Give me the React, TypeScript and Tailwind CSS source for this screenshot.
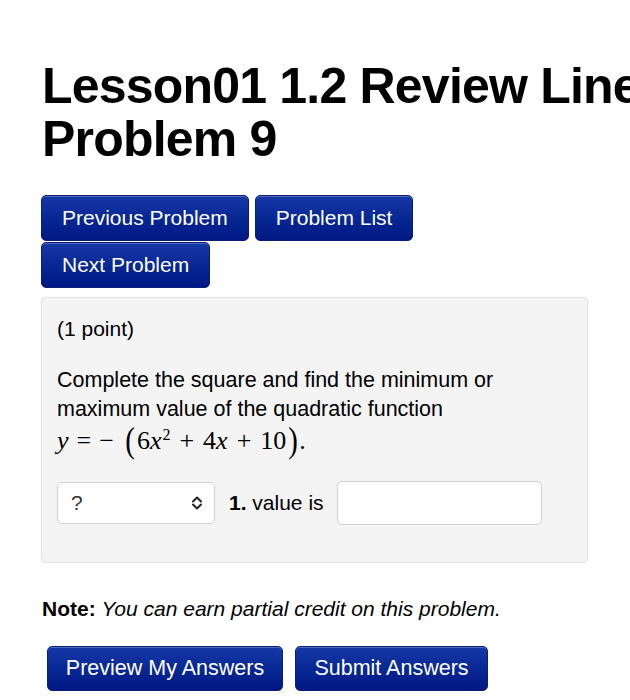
import React from "react";

const btn =
  "rounded-[5px] border border-[#0b1f73] bg-gradient-to-b from-[#1537a6] to-[#001783] text-white shadow-[inset_0_1px_0_rgba(255,255,255,0.25)]";

function UpDown() {
  return (
    <svg width="14" height="16" viewBox="0 0 14 16" fill="none" stroke="#222" strokeWidth="2" strokeLinecap="round" strokeLinejoin="round">
      <path d="M3 6.5 L7 2.5 L11 6.5" />
      <path d="M3 9.5 L7 13.5 L11 9.5" />
    </svg>
  );
}

export default function App() {
  return (
    <div className="w-[630px] h-[700px] overflow-hidden bg-white text-black font-['Liberation_Sans',Arial,sans-serif]">
      <div className="pl-[42px] pt-[60px]">
        <h1 className="whitespace-nowrap text-[50px] font-bold leading-[53px] tracking-[-0.8px]">
          Lesson01 1.2 Review Linear
          <br />
          Problem 9
        </h1>

        <div className="mt-[29px] flex flex-wrap gap-x-[6px] gap-y-[1px] w-[400px] -ml-px">
          <button className={`${btn} h-[46px] px-[20px] text-[21px]`}>Previous Problem</button>
          <button className={`${btn} h-[46px] px-[20px] text-[21px]`}>Problem List</button>
          <button className={`${btn} h-[46px] px-[20px] text-[21px]`}>Next Problem</button>
        </div>

        <div className="mt-[9px] -ml-px w-[547px] h-[266px] rounded-[4px] border border-[#e2e2e2] bg-[#f4f4f4] px-[15px] pt-[16px]">
          <p className="text-[21px] leading-[30px]">(1 point)</p>
          <p className="mt-[22px] text-[21.5px] leading-[29px] w-[480px]">
            Complete the square and find the minimum or maximum value of the quadratic function
          </p>
          <div className="flex items-center h-[34px] font-['Liberation_Serif','Times_New_Roman',serif] text-[26px] leading-none">
            <i>y</i>
            <span className="mx-[8px]">=</span>
            <span>−</span>
            <span className="ml-[10px] mr-[1px] text-[36px] font-light leading-none -translate-y-[1px] scale-x-[0.8]">(</span>
            <span>6</span>
            <i>x</i>
            <span className="text-[16px] self-start mt-[3px] ml-[1px]">2</span>
            <span className="mx-[9px]">+</span>
            <span>4</span>
            <i>x</i>
            <span className="mx-[9px]">+</span>
            <span>10</span>
            <span className="ml-[1px] text-[36px] font-light leading-none -translate-y-[1px] scale-x-[0.8]">)</span>
            <span>.</span>
          </div>

          <div className="mt-[23px] flex items-center">
            <div className="flex h-[42px] w-[158px] items-center justify-between rounded-[5px] border border-[#cfcfcf] bg-white pl-[13px] pr-[10px] text-[21px] text-[#333]">
              <span>?</span>
              <UpDown />
            </div>
            <span className="ml-[14px] text-[21px]">
              <b>1.</b> value is
            </span>
            <div className="ml-[13px] h-[44px] w-[205px] rounded-[5px] border border-[#cfcfcf] bg-white" />
          </div>
        </div>

        <p className="mt-[34px] text-[21px] leading-[24px]">
          <b>Note:</b> <i>You can earn partial credit on this problem.</i>
        </p>

        <div className="mt-[25px] ml-[5px] flex gap-[12px]">
          <button className={`${btn} h-[45px] w-[236px] text-[21.5px]`}>Preview My Answers</button>
          <button className={`${btn} h-[45px] w-[193px] text-[21.5px]`}>Submit Answers</button>
        </div>
      </div>
    </div>
  );
}
